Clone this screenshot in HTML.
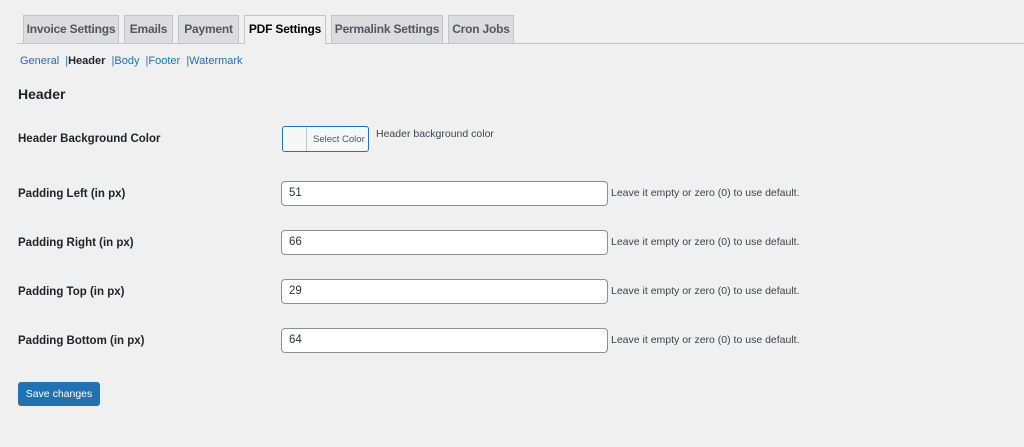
<!DOCTYPE html>
<html><head><style>
*{box-sizing:border-box;margin:0;padding:0}
body{width:1024px;height:447px;background:#f0f0f1;font-family:"Liberation Sans",sans-serif;color:#1d2327;position:relative;overflow:hidden}
.a{position:absolute;white-space:nowrap}
.line{position:absolute;left:17px;right:0;top:43px;height:1px;background:#c3c4c7}
.tab{position:absolute;top:15px;height:28px;background:#dcdcde;border:1px solid #c3c4c7;border-bottom:none;font-size:12px;font-weight:bold;color:#50575e;text-align:center;line-height:27px;white-space:nowrap;overflow:hidden;letter-spacing:-0.2px}
.tab.act{background:#f0f0f1;color:#000;height:29px}
.sub{font-size:11px;color:#2271b1;top:55px;left:20px}
.sub b{color:#1d2327}
.lbl{font-size:11.5px;font-weight:bold;left:18px}
.inp{position:absolute;left:281px;width:327px;height:25px;background:#fff;border:1px solid #8c8f94;border-radius:4px;font-size:11.5px;padding-left:7px;line-height:23px;color:#2c3338}
.desc{font-size:10.5px;color:#3c434a;left:611px}
</style></head><body>
<div class="line"></div>
<div class="tab" style="left:23px;width:96px">Invoice Settings</div>
<div class="tab" style="left:124px;width:49px">Emails</div>
<div class="tab" style="left:178px;width:61px">Payment</div>
<div class="tab act" style="left:244px;width:82px">PDF Settings</div>
<div class="tab" style="left:331px;width:112px">Permalink Settings</div>
<div class="tab" style="left:448px;width:66px">Cron Jobs</div>
<div class="a sub">General&nbsp;&nbsp;|<b>Header</b>&nbsp;&nbsp;|Body&nbsp;&nbsp;|Footer&nbsp;&nbsp;|Watermark</div>
<div class="a" style="left:18px;top:86px;font-size:14px;font-weight:bold">Header</div>
<div class="a lbl" style="top:133px">Header Background Color</div>
<div class="a" style="left:282px;top:126px;width:87px;height:26px;border:1px solid #2271b1;border-radius:3px;background:#f6f7f7;overflow:hidden">
<div style="position:absolute;left:0;top:0;width:24px;height:24px;background:#f6f7f7;border-right:1px solid #c3c4c7"></div>
<div style="position:absolute;left:30px;top:7px;font-size:9.5px;color:#50575e">Select Color</div></div>
<div class="a" style="left:376px;top:128px;font-size:10.5px;color:#3c434a">Header background color</div>
<div class="a lbl" style="top:188px">Padding Left (in px)</div>
<div class="inp" style="top:181px">51</div><div class="a desc" style="top:187px">Leave it empty or zero (0) to use default.</div>
<div class="a lbl" style="top:237px">Padding Right (in px)</div>
<div class="inp" style="top:230px">66</div><div class="a desc" style="top:236px">Leave it empty or zero (0) to use default.</div>
<div class="a lbl" style="top:286px">Padding Top (in px)</div>
<div class="inp" style="top:279px">29</div><div class="a desc" style="top:285px">Leave it empty or zero (0) to use default.</div>
<div class="a lbl" style="top:335px">Padding Bottom (in px)</div>
<div class="inp" style="top:328px">64</div><div class="a desc" style="top:334px">Leave it empty or zero (0) to use default.</div>
<div class="a" style="left:18px;top:382px;width:82px;height:24px;background:#2271b1;border-radius:3px;color:#fff;font-size:10.5px;text-align:center;line-height:24px">Save changes</div>
</body></html>
